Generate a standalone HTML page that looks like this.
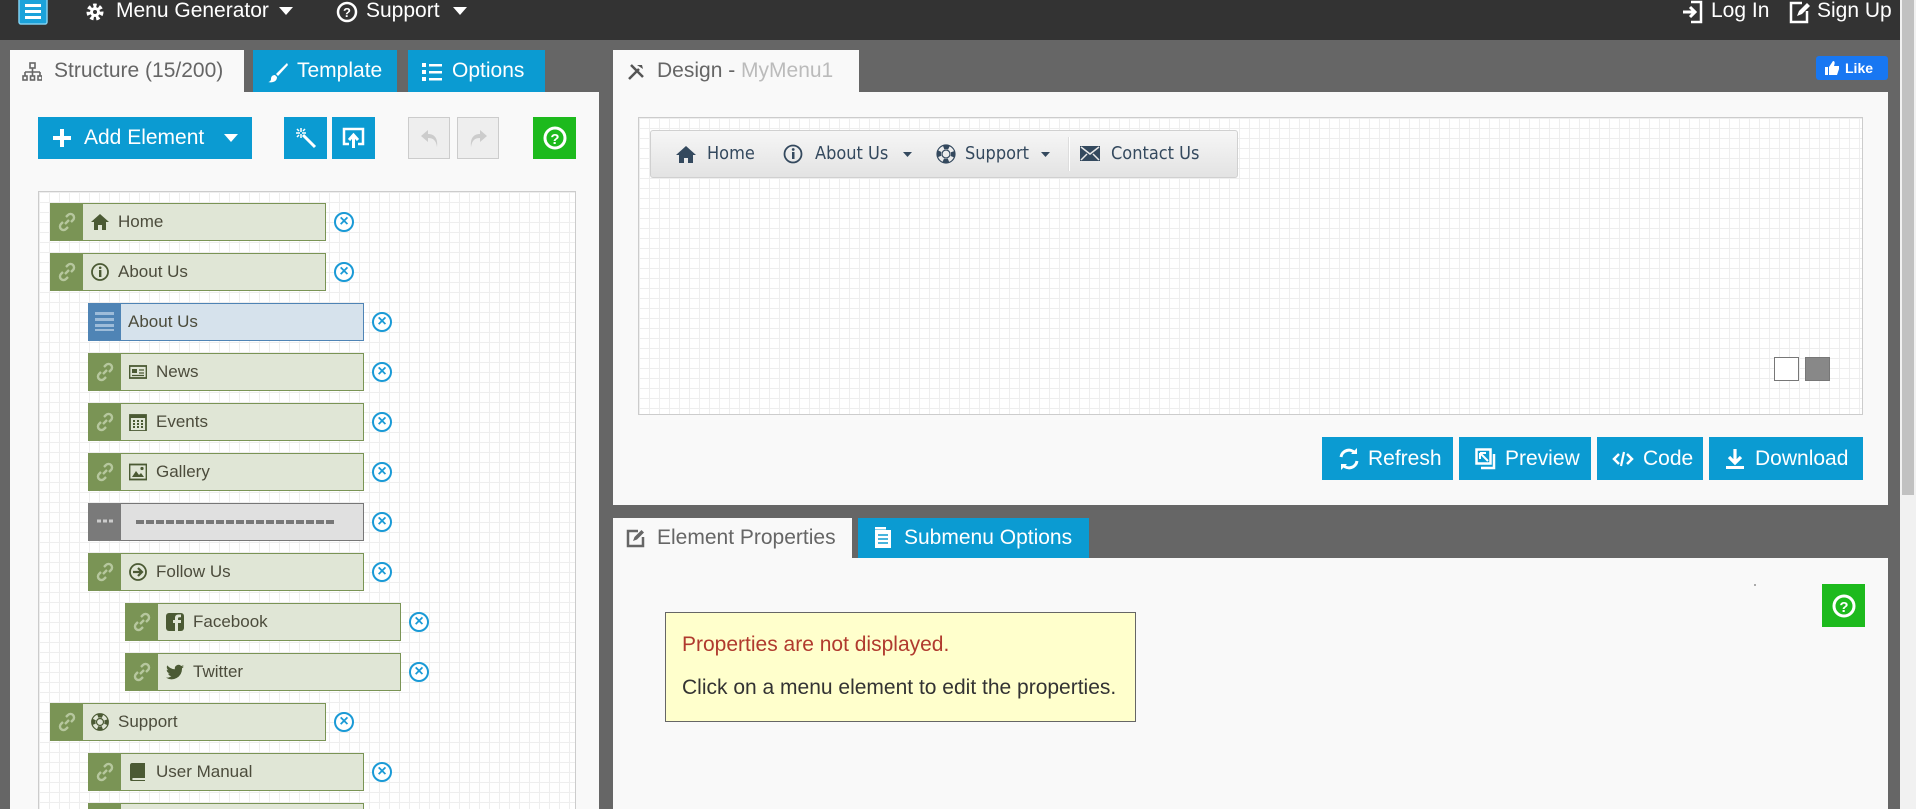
<!DOCTYPE html>
<html style="overflow:hidden;height:809px"><head><meta charset="utf-8"><style>
*{box-sizing:border-box;margin:0;padding:0}
body{width:1916px;height:809px;overflow:hidden;background:#666;font-family:"Liberation Sans",sans-serif;position:relative}
.a{position:absolute}
.top{left:0;top:0;width:1900px;height:40px;background:#333;color:#fff;font-size:21px}
.top span{position:absolute;top:-1px;line-height:24px}
.panel{background:#f9f9f9}
.tab{position:absolute;height:42px;font-size:21px;line-height:42px;color:#fff;background:#0b9bd2;padding-left:12px;white-space:nowrap}
.tab.on{background:#f9f9f9;color:#666}
.btn{position:absolute;background:#0b9bd2;color:#fff;font-size:21px;line-height:43px;white-space:nowrap}
.grid{background-color:#fff;background-image:linear-gradient(#eee 1px,transparent 1px),linear-gradient(90deg,#eee 1px,transparent 1px);background-size:10px 10px;border:1px solid #ccc}
.it{position:absolute;width:276px;height:38px;border:1px solid #7a9455;background:#e0e6d6;font-size:17px;color:#4c4c3c;line-height:36px}
.it .lk{position:absolute;left:-1px;top:-1px;width:33px;height:38px;background:#7a9455}
.it .lb{position:absolute;left:67px;top:0}
.it .ic{position:absolute;left:40px;top:9px;width:18px;height:18px}
.it.blue{border-color:#4f84b5;background:#d6e2ec}
.it.blue .lk{background:#4f84b5}
.it.sep{border-color:#777;background:#e0e0e0}
.it.sep .lk{background:#7a7a7a}
.x{position:absolute;width:20px;height:20px;border-radius:50%;border:2.5px solid #1a9ad6;background:#fff;color:#1a9ad6;font-size:16px;font-weight:bold;line-height:15px;text-align:center}
.mi{position:absolute;top:0;line-height:46px;font-size:18px;color:#34495e;font-family:"DejaVu Sans Condensed","Liberation Sans",sans-serif}
</style></head><body>

<!-- top bar -->
<div class="a top">
  <svg class="a" style="left:16px;top:0" width="34" height="26" viewBox="0 0 34 26"><rect x="3" y="-4" width="28" height="28" rx="2" fill="#1ba2da" stroke="#7fd0f0" stroke-width="1.5"/><rect x="9" y="4" width="16" height="3" fill="#fff"/><rect x="9" y="10" width="16" height="3" fill="#fff"/><rect x="9" y="16" width="16" height="3" fill="#fff"/></svg>
  <svg class="a" style="left:84px;top:1px" width="22" height="22" viewBox="0 0 22 22"><circle cx="11" cy="11" r="6" fill="none" stroke="#fff" stroke-width="5" stroke-dasharray="3 2.3"/><circle cx="11" cy="11" r="5" fill="#fff"/><circle cx="11" cy="11" r="2" fill="#333"/></svg>
  <span style="left:116px">Menu Generator</span>
  <svg class="a" style="left:279px;top:7px" width="14" height="9"><path d="M0 0h14L7 8z" fill="#fff"/></svg>
  <svg class="a" style="left:336px;top:1px" width="22" height="22"><circle cx="11" cy="11" r="9" fill="none" stroke="#fff" stroke-width="2.5"/><text x="11" y="16" font-size="13" font-weight="bold" fill="#fff" text-anchor="middle" font-family="Liberation Sans">?</text></svg>
  <span style="left:366px">Support</span>
  <svg class="a" style="left:453px;top:7px" width="14" height="9"><path d="M0 0h14L7 8z" fill="#fff"/></svg>
  <svg class="a" style="left:1682px;top:0" width="22" height="24"><path d="M9 2h10v20H9" fill="none" stroke="#fff" stroke-width="2.5"/><path d="M1 12h11M8 7l5 5-5 5" fill="none" stroke="#fff" stroke-width="3"/></svg>
  <span style="left:1711px">Log In</span>
  <svg class="a" style="left:1788px;top:0" width="22" height="24"><path d="M14 3H3v19h16V11" fill="none" stroke="#fff" stroke-width="2.5"/><path d="M9 16l2-5 8-8 3 3-8 8z" fill="#fff"/></svg>
  <span style="left:1817px">Sign Up</span>
</div>

<!-- scrollbar -->
<div class="a" style="left:1900px;top:0;width:16px;height:809px;background:#f1f1f1"></div>
<div class="a" style="left:1902px;top:0;width:12px;height:495px;background:#c1c1c1"></div>

<!-- LEFT PANEL -->
<div class="a panel" style="left:10px;top:92px;width:589px;height:717px"></div>
<div class="tab on" style="left:10px;top:50px;width:234px">
  <svg class="a" style="left:12px;top:12px" width="20" height="20"><rect x="8" y="1" width="5" height="5" fill="none" stroke="#666" stroke-width="1.6"/><path d="M10.5 6v4M3 10h15M3 10v4M10.5 10v4M18 10v4" stroke="#666" stroke-width="1.6" fill="none"/><rect x="1" y="14" width="4" height="4" fill="none" stroke="#666" stroke-width="1.6"/><rect x="8.5" y="14" width="4" height="4" fill="none" stroke="#666" stroke-width="1.6"/><rect x="16" y="14" width="4" height="4" fill="none" stroke="#666" stroke-width="1.6"/></svg>
  <span style="margin-left:32px">Structure (15/200)</span></div>
<div class="tab" style="left:253px;top:50px;width:144px">
  <svg class="a" style="left:14px;top:11px" width="22" height="22"><path d="M20 2L9 13l2 2L21 4z" fill="#fff"/><path d="M8 14c-3 0-4 2-4 4s-2 3-3 3c4 1 9 0 9-5z" fill="#fff"/></svg>
  <span style="margin-left:32px">Template</span></div>
<div class="tab" style="left:408px;top:50px;width:137px">
  <svg class="a" style="left:14px;top:12px" width="20" height="20"><rect x="0" y="1" width="4" height="4" fill="#fff"/><rect x="0" y="8" width="4" height="4" fill="#fff"/><rect x="0" y="15" width="4" height="4" fill="#fff"/><rect x="7" y="2" width="13" height="2.5" fill="#fff"/><rect x="7" y="9" width="13" height="2.5" fill="#fff"/><rect x="7" y="16" width="13" height="2.5" fill="#fff"/></svg>
  <span style="margin-left:32px">Options</span></div>

<div class="btn" style="left:38px;top:117px;width:214px;height:42px;line-height:42px">
  <svg class="a" style="left:15px;top:12px" width="18" height="18"><path d="M9 0v18M0 9h18" stroke="#fff" stroke-width="4"/></svg>
  <span style="position:absolute;left:46px">Add Element</span>
  <svg class="a" style="left:186px;top:17px" width="14" height="9"><path d="M0 0h14L7 8z" fill="#fff"/></svg></div>
<div class="btn" style="left:284px;top:117px;width:43px;height:42px">
  <svg class="a" style="left:11px;top:10px" width="22" height="22"><path d="M8 8l12 12" stroke="#fff" stroke-width="3"/><path d="M6 1v4M6 7v4M1 6h4M7 6h4M2 2l2 2M10 2L8 4M2 10l2-2" stroke="#fff" stroke-width="1.5"/></svg></div>
<div class="btn" style="left:332px;top:117px;width:43px;height:42px">
  <svg class="a" style="left:10px;top:10px" width="23" height="23"><path d="M7 17H2V2h19v15h-5" fill="none" stroke="#fff" stroke-width="2.5"/><path d="M11.5 21V9M7 13l4.5-5 4.5 5" fill="none" stroke="#fff" stroke-width="3"/></svg></div>
<div class="a" style="left:408px;top:117px;width:42px;height:42px;background:#eee;border:1px solid #ccc">
  <svg class="a" style="left:11px;top:10px" width="20" height="22"><path d="M8 2L1 8l7 6V10c5 0 8 2 9 9 1-8-2-13-9-13z" fill="#ccc"/></svg></div>
<div class="a" style="left:457px;top:117px;width:42px;height:42px;background:#eee;border:1px solid #ccc">
  <svg class="a" style="left:10px;top:10px" width="20" height="22"><path d="M12 2l7 6-7 6V10c-5 0-8 2-9 9-1-8 2-13 9-13z" fill="#ccc"/></svg></div>
<div class="a" style="left:533px;top:117px;width:43px;height:42px;background:#1dba1d">
  <svg class="a" style="left:10px;top:9px" width="24" height="24"><circle cx="12" cy="12" r="10" fill="none" stroke="#fff" stroke-width="3"/><text x="12" y="18" font-size="15" font-weight="bold" fill="#fff" text-anchor="middle" font-family="Liberation Sans">?</text></svg></div>

<div class="a" style="left:0;top:0;width:600px;height:809px;overflow:hidden">
<div class="a grid" style="left:38px;top:191px;width:538px;height:640px"></div>
<div id="tree"></div>
</div>

<!-- RIGHT DESIGN PANEL -->
<div class="a panel" style="left:613px;top:92px;width:1275px;height:413px"></div>
<div class="tab on" style="left:613px;top:50px;width:246px">
  <svg class="a" style="left:14px;top:13px" width="18" height="18"><path d="M2 16L12 6M4 2l12 12" stroke="#555" stroke-width="2.5"/><path d="M10 2l5 0 1 4z" fill="#555"/></svg>
  <span style="margin-left:32px;color:#666">Design - <span style="color:#bbb">MyMenu1</span></span></div>
<div class="a" style="left:1816px;top:56px;width:72px;height:24px;background:#1877f2;border-radius:3px;color:#fff;font-weight:bold;font-size:14px;line-height:24px">
  <svg class="a" style="left:9px;top:5px" width="15" height="14"><rect x="0" y="6" width="3" height="8" fill="#fff"/><path d="M4 6l4-6c2 0 2 2 1 5h5v3l-2 6H4z" fill="#fff"/></svg>
  <span style="position:absolute;left:29px">Like</span></div>

<div class="a grid" style="left:638px;top:117px;width:1225px;height:298px"></div>
<div class="a" style="left:650px;top:130px;width:588px;height:48px;border:1px solid #d0d0d0;border-radius:3px;background:linear-gradient(#f6f6f6,#e3e3e3)">
  <svg class="a" style="left:25px;top:14px" width="20" height="18"><path d="M10 1L0 10h3v8h5v-5h4v5h5v-8h3z" fill="#34495e"/></svg>
  <div class="mi" style="left:56px">Home</div>
  <svg class="a" style="left:132px;top:13px" width="20" height="20"><circle cx="10" cy="10" r="8.5" fill="none" stroke="#34495e" stroke-width="1.8"/><rect x="9" y="8" width="2.5" height="7" fill="#34495e"/><circle cx="10.2" cy="5.5" r="1.4" fill="#34495e"/></svg>
  <div class="mi" style="left:164px">About Us</div>
  <svg class="a" style="left:252px;top:21px" width="9" height="6"><path d="M0 0h9L4.5 5z" fill="#34495e"/></svg>
  <svg class="a" style="left:285px;top:13px" width="20" height="20"><circle cx="10" cy="10" r="7" fill="none" stroke="#34495e" stroke-width="4" stroke-dasharray="5.5 5.5" stroke-dashoffset="2.7"/><circle cx="10" cy="10" r="9" fill="none" stroke="#34495e" stroke-width="1.2"/><circle cx="10" cy="10" r="4" fill="none" stroke="#34495e" stroke-width="1.2"/></svg>
  <div class="mi" style="left:314px">Support</div>
  <svg class="a" style="left:390px;top:21px" width="9" height="6"><path d="M0 0h9L4.5 5z" fill="#34495e"/></svg>
  <div class="a" style="left:417px;top:6px;width:2px;height:34px;background:#fff;border-left:1px solid #ddd"></div>
  <svg class="a" style="left:429px;top:15px" width="20" height="15"><rect x="0" y="0" width="20" height="15" fill="#34495e"/><path d="M1 1l9 7 9-7M1 14l6-6M19 14l-6-6" stroke="#e8e8e8" stroke-width="1.5" fill="none"/></svg>
  <div class="mi" style="left:460px">Contact Us</div>
</div>
<div class="a" style="left:1774px;top:357px;width:25px;height:24px;background:#fff;border:1px solid #777"></div>
<div class="a" style="left:1805px;top:357px;width:25px;height:24px;background:#888;border:1px solid #777"></div>

<div class="btn" style="left:1322px;top:437px;width:131px;height:43px">
  <svg class="a" style="left:16px;top:11px" width="22" height="22"><path d="M3 9a8 8 0 0 1 14-4M19 13a8 8 0 0 1-14 4" fill="none" stroke="#fff" stroke-width="3"/><path d="M13 6h6V0zM9 16H3v6z" fill="#fff"/></svg>
  <span style="position:absolute;left:46px">Refresh</span></div>
<div class="btn" style="left:1459px;top:437px;width:132px;height:43px">
  <svg class="a" style="left:16px;top:11px" width="22" height="22"><rect x="1.5" y="1.5" width="14" height="14" fill="none" stroke="#fff" stroke-width="2.5"/><path d="M5 5l8 8M5 5v6M5 5h6" stroke="#fff" stroke-width="2"/><path d="M19 6v14H6" fill="none" stroke="#fff" stroke-width="2.5"/></svg>
  <span style="position:absolute;left:46px">Preview</span></div>
<div class="btn" style="left:1597px;top:437px;width:106px;height:43px">
  <svg class="a" style="left:15px;top:14px" width="22" height="16"><path d="M7 3L2 8l5 5M15 3l5 5-5 5" fill="none" stroke="#fff" stroke-width="2.5"/><path d="M12 1L9 15" stroke="#fff" stroke-width="2.2"/></svg>
  <span style="position:absolute;left:46px">Code</span></div>
<div class="btn" style="left:1709px;top:437px;width:154px;height:43px">
  <svg class="a" style="left:16px;top:11px" width="20" height="22"><path d="M10 1v13M4 9l6 6 6-6" fill="none" stroke="#fff" stroke-width="3.2"/><rect x="1" y="18" width="18" height="3" fill="#fff"/></svg>
  <span style="position:absolute;left:46px">Download</span></div>

<!-- LOWER PANEL -->
<div class="a panel" style="left:613px;top:558px;width:1275px;height:251px"></div>
<div class="tab on" style="left:613px;top:518px;width:239px;height:40px;line-height:40px;font-size:21px">
  <svg class="a" style="left:13px;top:10px" width="20" height="20"><path d="M12 3H2v15h15V9" fill="none" stroke="#666" stroke-width="2.5"/><path d="M7 13l1.5-4 7-7 2.5 2.5-7 7z" fill="#666"/></svg>
  <span style="margin-left:32px">Element Properties</span></div>
<div class="tab" style="left:858px;top:518px;width:231px;height:40px;line-height:40px;font-size:21px">
  <svg class="a" style="left:16px;top:9px" width="18" height="22"><rect x="1" y="3" width="16" height="18" fill="#fff"/><rect x="1" y="0" width="11" height="2.5" fill="#fff"/><path d="M4 8h10M4 12h10M4 16h10" stroke="#0b9bd2" stroke-width="1.5"/></svg>
  <span style="margin-left:34px">Submenu Options</span></div>
<div class="a" style="left:1754px;top:584px;width:2px;height:2px;background:#aaa"></div>
<div class="a" style="left:1822px;top:584px;width:43px;height:43px;background:#1dba1d">
  <svg class="a" style="left:10px;top:10px" width="24" height="24"><circle cx="12" cy="12" r="10" fill="none" stroke="#fff" stroke-width="3"/><text x="12" y="18" font-size="15" font-weight="bold" fill="#fff" text-anchor="middle" font-family="Liberation Sans">?</text></svg></div>
<div class="a" style="left:665px;top:612px;width:471px;height:110px;background:#ffffcc;border:1px solid #666;font-size:21px;white-space:nowrap">
  <div class="a" style="left:16px;top:20px;color:#b03a2e">Properties are not displayed.</div>
  <div class="a" style="left:16px;top:63px;color:#333">Click on a menu element to edit the properties.</div>
</div>

<script>
var items=[
[0,'Home','home'],[0,'About Us','info'],[1,'About Us','blue'],[1,'News','news'],[1,'Events','cal'],[1,'Gallery','img'],[1,'','sep'],[1,'Follow Us','arrow'],[2,'Facebook','fb'],[2,'Twitter','tw'],[0,'Support','sup'],[1,'User Manual','book'],[1,'','blank']];
var C='#4b5a34';
var icons={
home:'<path d="M9 1L0 9h3v8h4v-5h4v5h4V9h3z" fill="'+C+'"/>',
info:'<circle cx="9" cy="9" r="8" fill="none" stroke="'+C+'" stroke-width="1.8"/><rect x="8" y="7" width="2.4" height="7" fill="'+C+'"/><circle cx="9.2" cy="4.8" r="1.3" fill="'+C+'"/>',
news:'<rect x="0.5" y="3" width="17" height="12" fill="none" stroke="'+C+'" stroke-width="1.8"/><rect x="3" y="6" width="5" height="4" fill="'+C+'"/><path d="M10 7h5M10 10h5M3 12.5h12" stroke="'+C+'" stroke-width="1.3"/>',
cal:'<rect x="1" y="2" width="16" height="16" fill="none" stroke="'+C+'" stroke-width="1.8"/><rect x="1" y="2" width="16" height="3" fill="'+C+'"/><path d="M4 8h2M8 8h2M12 8h2M4 11h2M8 11h2M12 11h2M4 14h2M8 14h2M12 14h2" stroke="'+C+'" stroke-width="2"/>',
img:'<rect x="0.5" y="1.5" width="17" height="15" fill="none" stroke="'+C+'" stroke-width="1.8"/><path d="M3 14l4-6 3 4 2-2 3 4z" fill="'+C+'"/><circle cx="13" cy="5.5" r="1.6" fill="'+C+'"/>',
arrow:'<circle cx="9" cy="9" r="8" fill="none" stroke="'+C+'" stroke-width="1.8"/><path d="M4 9h9M9 5l4 4-4 4" fill="none" stroke="'+C+'" stroke-width="2.2"/>',
fb:'<rect x="0" y="0" width="18" height="18" rx="3" fill="'+C+'"/><path d="M12 18V10h3V7h-3V5.5c0-1 .5-1.3 1.5-1.3H15V1.5h-2.5C10 1.5 9 3 9 5v2H7v3h2v8z" fill="#e0e6d6"/>',
tw:'<path d="M18 3.5c-.7.3-1.4.5-2.1.6.8-.5 1.3-1.2 1.6-2-.7.4-1.5.7-2.3.9A3.7 3.7 0 0 0 8.9 6.3 10.4 10.4 0 0 1 1.3 2.4a3.7 3.7 0 0 0 1.1 4.9c-.6 0-1.2-.2-1.7-.5 0 1.8 1.300 3.3 3 3.6-.5.2-1.1.2-1.7.1.5 1.5 1.8 2.5 3.4 2.6A7.4 7.4 0 0 1 0 14.6 10.4 10.4 0 0 0 16 5.8V5.3c.8-.5 1.4-1.1 2-1.8z" fill="'+C+'"/>',
sup:'<circle cx="9" cy="9" r="6.5" fill="none" stroke="'+C+'" stroke-width="4" stroke-dasharray="5 5.2" stroke-dashoffset="2.5"/><circle cx="9" cy="9" r="8.3" fill="none" stroke="'+C+'" stroke-width="1.2"/><circle cx="9" cy="9" r="3.5" fill="none" stroke="'+C+'" stroke-width="1.2"/>',
book:'<path d="M3 0h13v15H4c-1 0-1 2 0 2h12v1H3c-2 0-2-1-2-2V2c0-1 1-2 2-2z" fill="'+C+'"/>'
};
var h='';
items.forEach(function(it,i){
 var lv=it[0],lb=it[1],t=it[2];
 var x=[50,88,125][lv],y=203+i*50;
 var cls='it'+(t=='blue'?' blue':'')+(t=='sep'?' sep':'');
 h+='<div class="'+cls+'" style="left:'+x+'px;top:'+y+'px"><div class="lk">';
 if(t=='blue') h+='<svg style="position:absolute;left:7px;top:9px" width="19" height="20"><rect y="0" width="19" height="3" fill="#9dbcd9"/><rect y="6" width="19" height="3" fill="#9dbcd9"/><rect y="12" width="19" height="3" fill="#9dbcd9"/><rect y="17" width="19" height="2" fill="#9dbcd9"/></svg>';
 else if(t=='sep') h+='<svg style="position:absolute;left:9px;top:16px" width="16" height="4"><path d="M0 2h4M6 2h4M12 2h4" stroke="#ccc" stroke-width="3"/></svg>';
 else h+='<svg style="position:absolute;left:7px;top:9px" width="20" height="20"><path d="M8 12l4-4M9 5l2-2a3.5 3.5 0 0 1 5 5l-2 2M11 15l-2 2a3.5 3.5 0 0 1-5-5l2-2" fill="none" stroke="#b6c79e" stroke-width="2.4"/></svg>';
 h+='</div>';
 if(t=='sep') h+='<div style="position:absolute;left:47px;top:16px;width:198px;height:4px;background:repeating-linear-gradient(90deg,#777 0 8px,transparent 8px 10px)"></div>';
 else if(t=='blue') h+='<span class="lb" style="left:39px">'+lb+'</span>';
 else if(t!='blank') h+='<svg class="ic" width="18" height="18" viewBox="0 0 18 18">'+icons[t]+'</svg><span class="lb">'+lb+'</span>';
 h+='</div>';
 if(t!='blank') h+='<div class="x" style="left:'+(x+284)+'px;top:'+(y+9)+'px">&#215;</div>';
});
document.getElementById('tree').innerHTML=h;
</script>
</body></html>
